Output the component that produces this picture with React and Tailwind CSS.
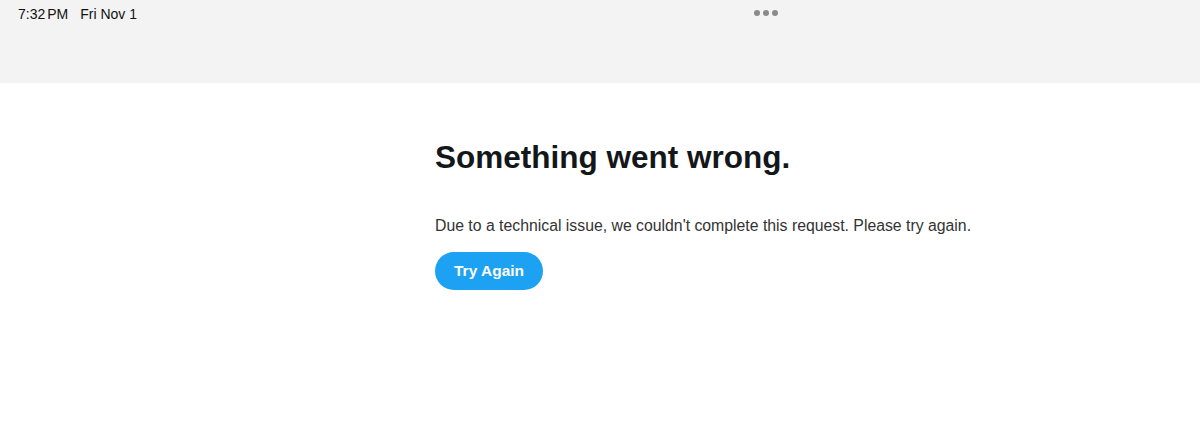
import React from "react";

export default function App() {
  return (
    <div className="w-[1200px] h-[448px] bg-white overflow-hidden" style={{ fontFamily: '"Liberation Sans", Arial, sans-serif' }}>
      <div className="relative h-[83px] bg-[#f3f3f3]">
        <div className="flex items-center pl-[18px] pt-[4px] text-[14px] text-[#111] leading-[20px]">
          <span>7:32</span>
          <span className="ml-[2px]">PM</span>
          <span className="ml-[12px]">Fri Nov 1</span>
        </div>
        <div className="absolute left-[754px] top-[10px] flex gap-[3px]">
          <span className="w-[6px] h-[6px] rounded-full bg-[#8a8a8a]" />
          <span className="w-[6px] h-[6px] rounded-full bg-[#8a8a8a]" />
          <span className="w-[6px] h-[6px] rounded-full bg-[#8a8a8a]" />
        </div>
      </div>
      <div className="pl-[435px] pt-[52px]">
        <h1 className="text-[31.5px] font-bold text-[#14171a] leading-[44px]">Something went wrong.</h1>
        <p className="mt-[35px] text-[15.8px] text-[#333] leading-[24px]">
          Due to a technical issue, we couldn't complete this request. Please try again.
        </p>
        <button className="mt-[14px] h-[38px] px-[19px] rounded-full bg-[#1da1f2] text-white font-bold text-[15.5px]">
          Try Again
        </button>
      </div>
    </div>
  );
}
